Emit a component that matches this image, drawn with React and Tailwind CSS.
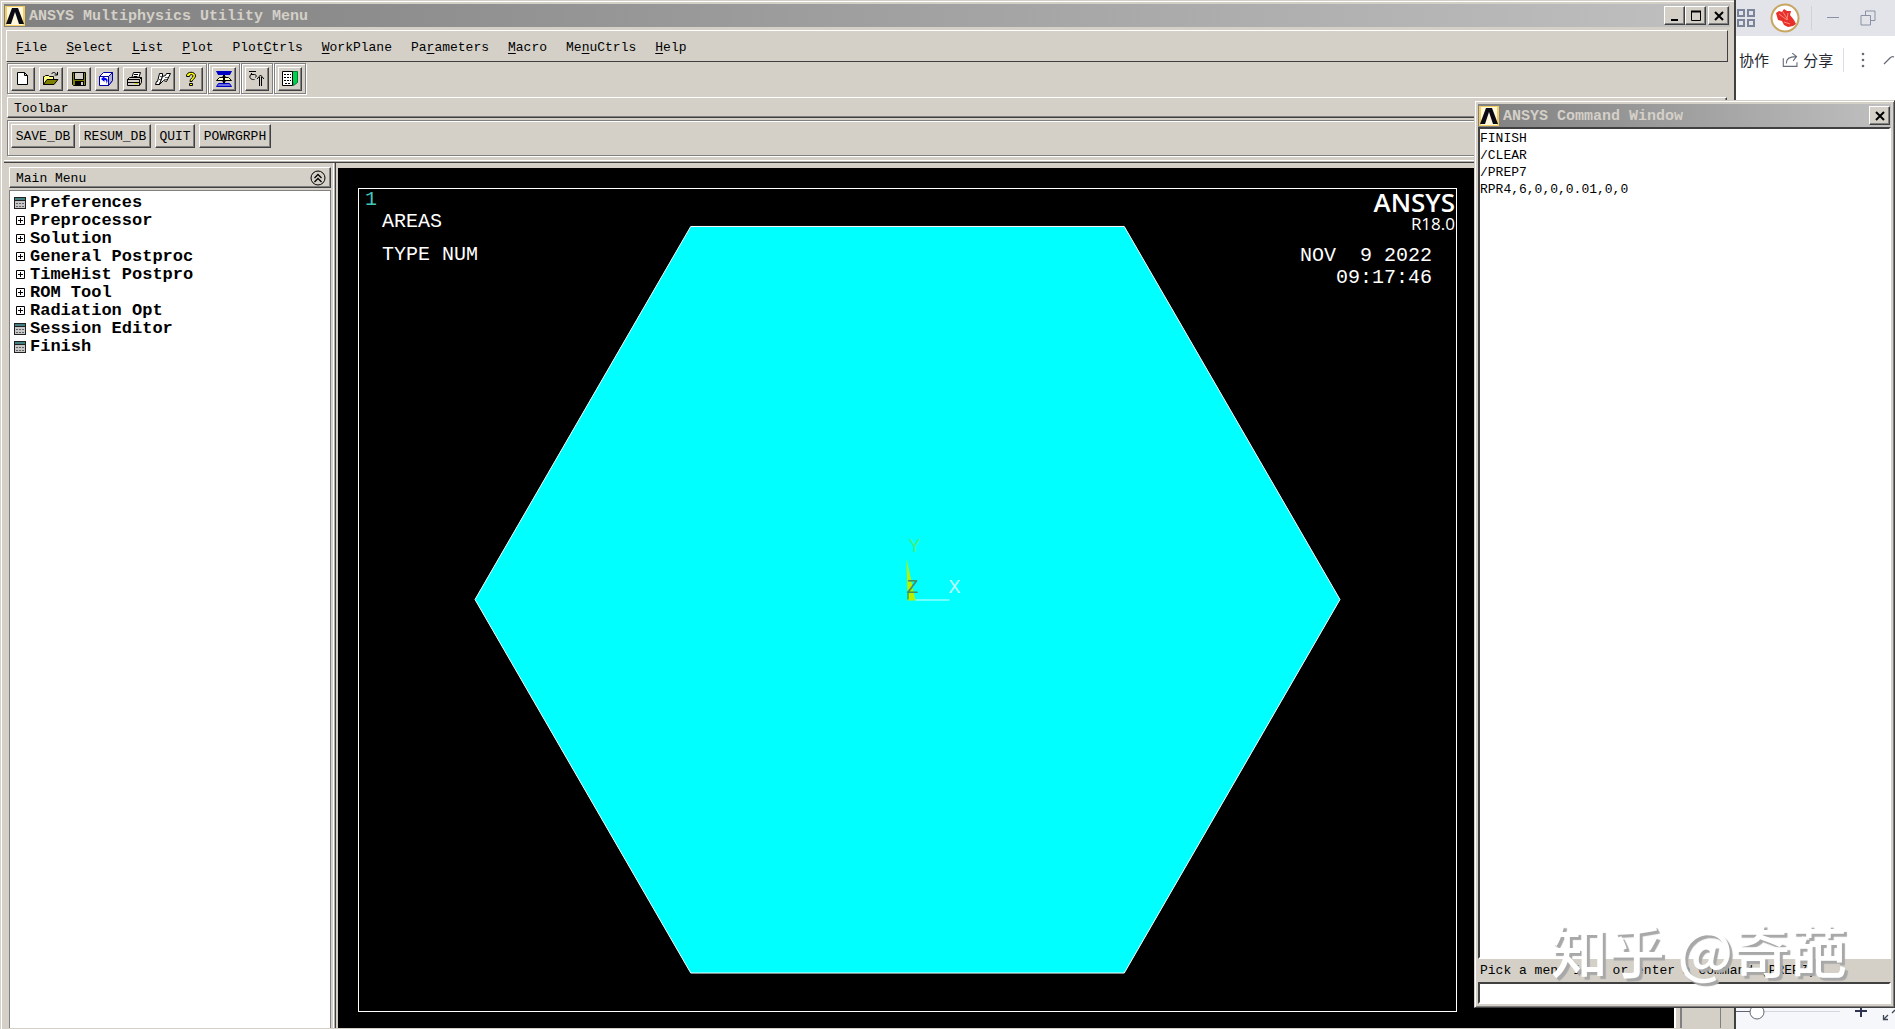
import React from 'react'
import { useState } from 'react'

// Win classic 3D edges
const raised = 'border border-t-white border-l-white border-r-[#404040] border-b-[#404040] shadow-[inset_-1px_-1px_0_#808080]'
const etched = 'border border-[#808080] shadow-[inset_1px_1px_0_#fff,1px_1px_0_#fff]'

// key = index of the underlined letter
const menus = [
    { name: 'File', key: 0 },
    { name: 'Select', key: 0 },
    { name: 'List', key: 0 },
    { name: 'Plot', key: 0 },
    { name: 'PlotCtrls', key: 4 },
    { name: 'WorkPlane', key: 0 },
    { name: 'Parameters', key: 2 },
    { name: 'Macro', key: 0 },
    { name: 'MenuCtrls', key: 2 },
    { name: 'Help', key: 0 },
]

const shortcuts = [
    { name: 'SAVE_DB', width: 'w-16' },
    { name: 'RESUM_DB', width: 'w-[72px]' },
    { name: 'QUIT', width: 'w-10' },
    { name: 'POWRGRPH', width: 'w-[72px]' },
]

const tree = [
    { name: 'Preferences', leaf: true },
    { name: 'Preprocessor' },
    { name: 'Solution' },
    { name: 'General Postproc' },
    { name: 'TimeHist Postpro' },
    { name: 'ROM Tool' },
    { name: 'Radiation Opt' },
    { name: 'Session Editor', leaf: true },
    { name: 'Finish', leaf: true },
]

const commands = ['FINISH', '/CLEAR', '/PREP7', 'RPR4,6,0,0,0.01,0,0']

const icons = {
    new: (
        <path d="M2.500 1.500h7l3 3v9h-10zM9.500 1.500v3h3" fill="#fff" stroke="#000" />
    ),
    open: (
        <>
            <path d="M0.500 13.500v-8h1l1-1h3l1 1h4v3" fill="#ffff80" stroke="#000" />
            <path d="M0.500 13.500l3.500-5h11l-4 5z" fill="#808000" stroke="#000" />
            <path d="M8.500 3c1-2 4-2 5 0.500M14.500 1v3h-3" fill="none" stroke="#000" />
        </>
    ),
    save: (
        <>
            <path d="M1.500 1.500h13v13h-12l-1-1z" fill="#808000" stroke="#000" />
            <path d="M4 2h8v6h-8z" fill="#d4d0c8" />
            <path d="M3.500 2v6.500h9v-6.500" fill="none" stroke="#000" />
            <path d="M4 10h9v5h-9z" fill="#000" />
            <path d="M10 11h2v3h-2z" fill="#d4d0c8" />
        </>
    ),
    resume: (
        <>
            <path d="M0.500 5.500l4-4h9v8l-4 5h-9z" fill="#fff" stroke="#0000a0" />
            <path d="M9.500 5.500l4-4v8l-4 5z" fill="#b0b0d0" stroke="#0000a0" />
            <path d="M0.500 5.500h9v9" fill="none" stroke="#0000a0" />
            <path d="M2 8l3.500-3v2c3 0 4 2 2 6c0-2.500 0-4-2-4v2z" fill="#0000ff" />
        </>
    ),
    print: (
        <>
            <path d="M4.500 7.500l2-6h7l-2 6z" fill="#fff" stroke="#000" />
            <path d="M7 3.500h4M6.500 5.500h4" stroke="#000" />
            <path d="M0.500 8.500l2-2h12v5l-2 3h-12z" fill="#d4d0c8" stroke="#000" />
            <path d="M0.500 8.500h12v6M12.500 8.500l2-2M1 11.500h11" fill="none" stroke="#000" />
            <path d="M8 12.500h3" stroke="#d0d000" />
        </>
    ),
    report: (
        <>
            <path d="M4.500 2.500h3v3l-3 8h-4l1-3h1z" fill="#fff" stroke="#000" />
            <path d="M7.500 5.500l3-1l1-2h4l-4 8l-3-1l-4 4z" fill="#fff" stroke="#000" />
            <path d="M5 5.500h2M4 8.500h2M10 6.500h3M9 8.500h3" fill="none" stroke="#606060" />
        </>
    ),
    help: (
        <>
            <path d="M3.500 5c0-5 9-5 9 0c0 3-3.500 3-3.500 5.500h-2c0-3.500 3-3.500 3-5.500s-3.500-2-3.500 0.500h-3z" fill="#ffff00" stroke="#000" />
            <path d="M6.500 12.500h3v2h-3z" fill="#ffff00" stroke="#000" />
        </>
    ),
    raise: (
        <>
            <path d="M0 0h16l-2 4h-12z" fill="#0000c0" />
            <path d="M0.500 9.500l3-3h9l3 3z" fill="#ffffc0" stroke="#000" />
            <path d="M0.500 15.500l2-3h11l2 3z" fill="#6868e0" stroke="#0000c0" />
            <path d="M8 4v8" stroke="#000" strokeWidth="2" />
            <path d="M5 7l3-3l3 3zM5 9h6l-3 3z" fill="#000" />
        </>
    ),
    reset: (
        <>
            <path d="M0 0.500h7M2.500 2v2M1.500 3.500h4c2 0 2 2 1 3M1.500 4c-2 3 1 5 4 4.500" fill="none" stroke="#000" />
            <path d="M8 8l3.500-4l3.500 4M10.500 6v9M12.500 6v9" fill="none" stroke="#000" />
        </>
    ),
    contact: (
        <>
            <path d="M8.500 0.500h7v11l-4 3z" fill="#00d050" stroke="#008030" />
            <path d="M0.500 0.500h10v14h-10z" fill="#fff" stroke="#000" />
            <path d="M2 3.500h2M5 3.500h4M2 6.500h2M5 6.500h4M2 9.500h2M5 9.500h4M3 12.500h5" stroke="#000" strokeDasharray="2 1" />
        </>
    ),
}

const iconGroups = [
    [
        ['new', 'New Analysis'],
        ['open', 'Open File'],
        ['save', 'Save Analysis'],
        ['resume', 'Pan-Zoom-Rotate'],
        ['print', 'Print'],
        ['report', 'Report Generator'],
        ['help', 'Help'],
    ],
    [['raise', 'Raise Hidden']],
    [['reset', 'Reset Picking']],
    [['contact', 'Contact Manager']],
]

const AnsysIcon = () => (
    <svg width="20" height="20" viewBox="0 0 20 20" className="shrink-0" aria-hidden="true">
        <rect width="20" height="20" fill="#f3cf62" />
        <rect x="2" y="1" width="16" height="18" fill="#fff8dc" />
        <path d="M7 2h6l6 16h-5L10 6L6 18H1z" fill="#0a0a14" />
    </svg>
)

const CaptionButton = ({ label, children }) => (
    <button aria-label={label} className={`flex h-[19px] w-[21px] items-center justify-center bg-[#d4d0c8] ${raised}`}>
        <svg width="14" height="14" viewBox="0 0 14 14" fill="none" stroke="#000" strokeWidth="2">
            {children}
        </svg>
    </button>
)

const TitleBar = ({ title, children }) => (
    <div className="flex h-[23px] shrink-0 items-center bg-linear-to-r from-[#808080] to-[#c0c0c0] px-px">
        <AnsysIcon />
        <h1 className="ml-1 flex-1 whitespace-nowrap pt-[3px] text-[15px] font-bold leading-5 text-[#d4d0c8]">{title}</h1>
        {children}
    </div>
)

const CloseGlyph = () => <path d="M3 3l8 8M11 3l-8 8" />

const MenuBar = () => (
    <nav className="mx-[2px] mt-[3px] flex h-8 shrink-0 items-center gap-[19px] border border-t-white border-l-white border-r-[#404040] border-b-[#404040] pl-[9px] pt-[3px]">
        {menus.map(({ name, key }) => (
            <button key={name} className="whitespace-pre">
                {name.slice(0, key)}
                <span className="underline underline-offset-2">{name[key]}</span>
                {name.slice(key + 1)}
            </button>
        ))}
    </nav>
)

const IconBar = () => (
    <div className="ml-[3px] mt-px flex h-[31px] shrink-0 gap-px">
        {iconGroups.map((group, i) => (
            <div key={i} className={`flex items-center gap-1 px-[3px] ${etched}`}>
                {group.map(([icon, label]) => (
                    <button key={icon} aria-label={label} className={`flex size-6 items-center justify-center ${raised}`}>
                        <svg width="16" height="16" viewBox="0 0 16 16">{icons[icon]}</svg>
                    </button>
                ))}
            </div>
        ))}
    </div>
)

const TreeIcon = ({ leaf }) => (
    leaf ? (
        <svg width="12" height="12" viewBox="0 0 12 12">
            <rect x="0.5" y="0.5" width="11" height="11" fill="#c8c8c8" stroke="#202020" />
            <path d="M1 2h10" stroke="#408080" strokeWidth="2" />
            <path d="M1 3.500h10" stroke="#202020" />
            <path d="M2 6.500h8M2 9.500h8" stroke="#606060" strokeDasharray="2 1" />
        </svg>
    ) : (
        <svg width="12" height="12" viewBox="0 0 12 12" fill="none" stroke="#000">
            <path d="M2.500 1.500h8v8h-8zM4 5.500h5M6.500 3v5" />
        </svg>
    )
)

const MainMenu = () => (
    <aside className="ml-[5px] flex w-[322px] shrink-0 flex-col pt-1">
        <div className={`flex h-[21px] shrink-0 items-center justify-between pl-1.5 pr-1 ${raised}`}>
            <h2 className="pt-[2px]">Main Menu</h2>
            <button aria-label="Collapse">
                <svg width="16" height="16" viewBox="0 0 16 16" fill="none" stroke="#000">
                    <circle cx="8" cy="8" r="7" />
                    <path d="M4.500 8l3.500-3.500l3.500 3.500M4.500 12l3.500-3.500l3.500 3.500" strokeWidth="1.300" />
                </svg>
            </button>
        </div>
        <ul className="mt-[2px] flex-1 border border-b-0 border-[#808080] bg-white pl-1 pt-[3px] text-[17px] font-bold leading-[18px]">
            {tree.map(({ name, leaf }) => (
                <li key={name}>
                    <button className="flex items-center gap-1 text-left">
                        <TreeIcon leaf={leaf} />
                        {name}
                    </button>
                </li>
            ))}
        </ul>
    </aside>
)

const Graphics = () => (
    <main className="mt-[5px] min-w-0 flex-1 bg-black pb-4 pl-5 pr-[217px] pt-5 text-[20px] text-white">
        <div className="relative h-full border border-white">
            <svg className="block h-full w-full" viewBox="0 0 1098 823" preserveAspectRatio="xMidYMid meet">
                <path d="M116 411L332 37.500H766L982 411L766 785H332z" fill="#00ffff" stroke="#fff" />
                <path d="M548 370L557 412H549z" fill="#b8f000" />
                <path d="M549.500 403v8" stroke="#008080" />
                <path d="M557 411.500h34" stroke="#d8ffff" />
                <g fontSize="20" textAnchor="middle">
                    <text x="556" y="363" fill="#40f080">Y</text>
                    <text x="554" y="404" fill="#409060">Z</text>
                    <text x="596" y="404" fill="#c0ffff">X</text>
                </g>
            </svg>
            <div className="absolute inset-x-0 top-0 flex justify-between">
                <div className="pl-1.5">
                    <p className="leading-[22px] text-[#40c8b8]">1</p>
                    <p className="pl-[17px] leading-[22px]">AREAS</p>
                    <p className="pl-[17px] pt-[11px] leading-[22px]">TYPE NUM</p>
                </div>
                <div className="text-right">
                    <p className="pr-px font-['Open_Sans',sans-serif] text-[26px] font-semibold leading-[26px]">ANSYS</p>
                    <p className="pr-px font-['Open_Sans',sans-serif] text-[17px] leading-[18px]">R18.0</p>
                    <p className="whitespace-pre pr-6 pt-3 leading-[22px]">NOV  9 2022</p>
                    <p className="pr-6 leading-[22px]">09:17:46</p>
                </div>
            </div>
        </div>
    </main>
)

const UtilityWindow = () => (
    <section className="flex min-w-0 flex-1 flex-col border-r-2 border-[#404040] bg-[#d4d0c8] pb-px pl-1 pt-1 shadow-[inset_1px_1px_0_#d4d0c8,inset_2px_2px_0_#fff]">
        <div className="mr-1 flex flex-col">
            <TitleBar title="ANSYS Multiphysics Utility Menu">
                <CaptionButton label="Minimize"><path d="M3 11h7" /></CaptionButton>
                <CaptionButton label="Maximize">
                    <path d="M2 2.500h10" />
                    <path d="M2.500 2v9.500h9v-9.500" strokeWidth="1" />
                </CaptionButton>
                <span className="w-[2px]" />
                <CaptionButton label="Close"><CloseGlyph /></CaptionButton>
            </TitleBar>
            <MenuBar />
            <IconBar />
            <div className={`mx-[3px] mt-[3px] h-[21px] pl-1.5 pt-px leading-[19px] ${raised}`}>Toolbar</div>
            <div className={`mx-[3px] mt-[2px] flex h-9 gap-1 px-[3px] pt-[3px] ${etched}`}>
                {shortcuts.map(({ name, width }) => (
                    <button key={name} className={`h-6 pt-[2px] ${width} ${raised}`}>{name}</button>
                ))}
            </div>
        </div>
        <div className="mt-1 h-[3px] shrink-0 border-b border-t border-b-[#404040] border-t-white bg-[#b0aca4]" />
        <div className="flex min-h-0 flex-1">
            <MainMenu />
            <div className="ml-[2px] mr-[2px] w-[3px] shrink-0 border-l border-r border-l-white border-r-[#404040] bg-[#b0aca4]" />
            <Graphics />
            <div className="flex w-[60px] shrink-0">
                <div className="w-2 border-x-2 border-l-white border-r-[#808080]" />
                <div className="w-[39px] border-r border-[#808080]" />
            </div>
        </div>
    </section>
)

const CommandWindow = () => {
    const [command, setCommand] = useState('')

    return (
        <section className="absolute bottom-[21px] right-0 top-[100px] flex w-[421px] flex-col border border-b-[#404040] border-l-[#d4d0c8] border-r-[#404040] border-t-[#d4d0c8] bg-[#d4d0c8] p-[3px] shadow-[inset_1px_1px_0_#fff,inset_-1px_-1px_0_#808080]">
            <TitleBar title="ANSYS Command Window">
                <CaptionButton label="Close"><CloseGlyph /></CaptionButton>
            </TitleBar>
            <div className="min-h-0 flex-1 border-2 border-b-white border-l-[#404040] border-r-white border-t-[#404040] bg-white pt-px leading-[17px]">
                {commands.map((line) => (
                    <p key={line}>{line}</p>
                ))}
            </div>
            <label htmlFor="command" className="whitespace-nowrap pl-[2px] pt-px leading-[22px]">
                Pick a menu item or enter a command (PREP7)
            </label>
            <input
                id="command"
                type="text"
                className="h-[22px] w-full border-2 border-b-white border-l-[#404040] border-r-white border-t-[#404040] bg-white px-px outline-none"
                value={command}
                onChange={(e) => setCommand(e.target.value)}
            />
        </section>
    )
}

const DocumentWindow = () => (
    <section className="flex w-[159px] shrink-0 flex-col justify-between overflow-hidden bg-white">
        <div>
            <div className="flex h-9 items-center bg-[#e2e4ea]">
                <svg width="20" height="20" viewBox="0 0 20 20" fill="none" stroke="#7c8499" strokeWidth="2">
                    <path d="M2 2h6v6H2zM12 2h6v6h-6zM2 12h6v6H2zM12 12h6v6h-6z" />
                </svg>
                <svg width="30" height="30" viewBox="0 0 30 30" className="ml-3.5">
                    <circle cx="15" cy="15" r="13.500" fill="#fff" stroke="#c9a562" strokeWidth="2" />
                    <path d="M6 10l3-2l3 1l2-3l3 2l4 0l-1 4l4 5l2 4l-3 2l-5 1l-4-2l-2-4l-4-1z" fill="#e8302a" />
                    <path d="M9 11l8 6M13 9l5 8M18 10l-1 6M14 19l6 2" stroke="#ff8878" fill="none" />
                </svg>
                <div className="ml-[11px] h-6 w-px bg-[#cfd2da]" />
                <svg width="14" height="14" viewBox="0 0 14 14" className="ml-3.5" stroke="#8a91a5">
                    <path d="M1 6.500h12" />
                </svg>
                <svg width="16" height="16" viewBox="0 0 16 16" className="ml-5" fill="none" stroke="#8a91a5">
                    <path d="M1 5.500h9.500v9.500h-9.500zM5.500 5.500v-4.500h9.500v9.500h-4.500" />
                </svg>
            </div>
            <div className="flex h-12 items-center whitespace-nowrap pl-[3px] font-['Noto_Sans_CJK_SC',sans-serif] text-[15px] text-[#23262e]">
                <span>协作</span>
                <svg width="20" height="20" viewBox="0 0 20 20" className="ml-[13px] mr-1" fill="none" stroke="#666b78" strokeWidth="1.300">
                    <path d="M1.500 8v9.500h16v-5M5 14c0-6 4-8 11-8M12 2l5 4l-4 5" />
                </svg>
                <span>分享</span>
                <div className="ml-2.5 h-6 w-px bg-[#dcdee4]" />
                <svg width="4" height="16" viewBox="0 0 4 16" className="ml-[17px] shrink-0" fill="#666b78">
                    <circle cx="2" cy="2" r="1.300" />
                    <circle cx="2" cy="8" r="1.300" />
                    <circle cx="2" cy="14" r="1.300" />
                </svg>
                <svg width="12" height="12" viewBox="0 0 12 12" className="ml-[18px] shrink-0" fill="none" stroke="#666b78" strokeWidth="1.300">
                    <path d="M1 10l6-6q2-2 4-1" />
                </svg>
            </div>
        </div>
        <div className="h-8 bg-[#f5f7fa]">
            <svg width="159" height="32" viewBox="0 0 159 32" fill="none">
                <path d="M0 14.500h14" stroke="#606672" />
                <path d="M28 14.500h76" stroke="#d4d7dd" />
                <circle cx="21" cy="15" r="7" fill="#fff" stroke="#606672" />
                <path d="M119 14h12M125 8v12" stroke="#2f3550" strokeWidth="2" />
                <path d="M152 18l-4 4M147.500 18v4.500h4.500M156 16l3-3" stroke="#404654" strokeWidth="1.300" />
            </svg>
        </div>
    </section>
)

const App = () => {
    return (
        <div className="relative flex h-screen overflow-hidden font-['Liberation_Mono','Noto_Sans_CJK_SC',monospace] text-[13px] text-black">
            <UtilityWindow />
            <DocumentWindow />
            <CommandWindow />
            <p className="pointer-events-none absolute bottom-[53px] right-[48px] whitespace-nowrap font-['Noto_Sans_CJK_SC',sans-serif] text-[57px] font-medium leading-[56px] text-white [text-shadow:3px_3px_1px_#a8a8a8]">
                知乎 @奇葩
            </p>
        </div>
    )
}

export default App
